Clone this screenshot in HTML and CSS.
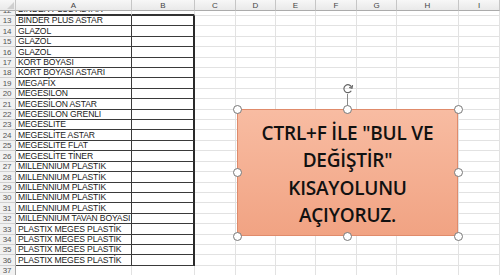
FILE: index.html
```html
<!DOCTYPE html>
<html lang="tr">
<head>
    <meta charset="UTF-8">
    <title>Excel - Bul ve Değiştir</title>
    <link rel="stylesheet" href="styles.css">
</head>
<body>
    <div class="sheet" id="sheet">
        <div class="row head">
            <div class="cell corner"><span class="tri"></span></div>
            <div class="cell">A</div>
            <div class="cell">B</div>
            <div class="cell">C</div>
            <div class="cell">D</div>
            <div class="cell">E</div>
            <div class="cell">F</div>
            <div class="cell">G</div>
            <div class="cell">H</div>
            <div class="cell">I</div>
        </div>
    </div>

    <div class="shape">
        <p>CTRL+F İLE "BUL VE<br>DEĞİŞTİR"<br>KISAYOLUNU<br>AÇIYORUZ.</p>
    </div>
    <div class="rot-line"></div>
    <svg class="rot" width="12" height="12" viewBox="0 0 12 12">
        <path d="M9.3 7.8 A4 4 0 1 1 9.6 4.2" fill="none" stroke="#666" stroke-width="1.2"/>
        <path d="M10.6 2.2 L10 5.2 L7.2 4.4" fill="none" stroke="#666" stroke-width="1.1"/>
    </svg>
    <span class="handle" style="left:237px;top:109px"></span>
    <span class="handle" style="left:347px;top:109px"></span>
    <span class="handle" style="left:458px;top:109px"></span>
    <span class="handle" style="left:237px;top:172px"></span>
    <span class="handle" style="left:458px;top:172px"></span>
    <span class="handle" style="left:237px;top:236px"></span>
    <span class="handle" style="left:347px;top:236px"></span>
    <span class="handle" style="left:458px;top:236px"></span>

    <script>
        const items = {
            12: 'BİNDER PLUS ASTAR',
            13: 'BİNDER PLUS ASTAR',
            14: 'GLAZOL',
            15: 'GLAZOL',
            16: 'GLAZOL',
            17: 'KORT BOYASI',
            18: 'KORT BOYASI ASTARI',
            19: 'MEGAFİX',
            20: 'MEGESİLON',
            21: 'MEGESİLON ASTAR',
            22: 'MEGESİLON GRENLİ',
            23: 'MEGESLİTE',
            24: 'MEGESLİTE ASTAR',
            25: 'MEGESLİTE FLAT',
            26: 'MEGESLİTE TİNER',
            27: 'MILLENNIUM PLASTİK',
            28: 'MILLENNIUM PLASTİK',
            29: 'MILLENNIUM PLASTİK',
            30: 'MILLENNIUM PLASTİK',
            31: 'MILLENNIUM PLASTİK',
            32: 'MILLENNIUM TAVAN BOYASI',
            33: 'PLASTIX MEGES PLASTİK',
            34: 'PLASTIX MEGES PLASTİK',
            35: 'PLASTIX MEGES PLASTİK',
            36: 'PLASTIX MEGES PLASTİK'
        };

        const sheet = document.getElementById('sheet');

        for (let n = 12; n <= 37; n++) {
            const row = document.createElement('div');
            row.className = 'row';
            if (n === 12) row.classList.add('cut');
            if (n === 37) row.classList.add('last');

            let html = `<div class="cell num"><span>${n}</span></div>`;
            const inTable = n >= 13 && n <= 36;
            const text = items[n] || '';
            html += `<div class="cell a ${inTable ? 't' : ''}"><span>${text}</span></div>`;
            html += `<div class="cell b ${inTable ? 't' : ''}"></div>`;
            for (let c = 0; c < 7; c++) {
                html += '<div class="cell"></div>';
            }
            row.innerHTML = html;
            sheet.appendChild(row);
        }
    </script>
</body>
</html>
```

FILE: styles.css
```css
body {
    margin: 0;
    width: 500px;
    height: 275px;
    overflow: hidden;
    background-color: #fff;
    font-family: "Liberation Sans", Arial, sans-serif;
}
.sheet {
    display: flex;
    flex-direction: column;
}
.row {
    display: grid;
    grid-template-columns: 16px 116px 63px 41px 40px 40px 41px 40px 62px 41px;
    height: 10.42px;
}
.cell {
    box-sizing: border-box;
    border-right: 1px solid #e2e2e2;
    border-bottom: 1px solid #e2e2e2;
    font-size: 8.6px;
    color: #1a1a1a;
    overflow: hidden;
    white-space: nowrap;
    display: flex;
    align-items: flex-end;
}
.cell span {
    line-height: 9px;
    padding-left: 2px;
    letter-spacing: -0.15px;
}
.head {
    height: 11px;
}
.head .cell {
    background: linear-gradient(#f7f7f7, #e9e9e9);
    border-right: 1px solid #c6c6c6;
    border-bottom: 1px solid #ababab;
    justify-content: center;
    align-items: center;
    font-size: 8px;
    color: #444;
}
.corner {
    position: relative;
}
.tri {
    position: absolute;
    right: 1px;
    bottom: 1px;
    width: 0;
    height: 0;
    border-left: 7px solid transparent;
    border-bottom: 7px solid #cfcfcf;
    padding: 0 !important;
}
.num {
    background-color: #f1f1f1;
    border-right: 1px solid #a9a9a9;
    border-bottom: 1px solid #d0d0d0;
    justify-content: center;
    font-size: 8px;
}
.num span {
    color: #555;
    padding-left: 0;
    padding-right: 1px;
}
.cut {
    height: 5px;
}
.cut .a, .cut .b {
    border-bottom: 2px solid #333;
}
.t {
    border-right: 1px solid #3a3a3a;
    border-bottom: 1px solid #3a3a3a;
}
.b.t {
    border-right: 2px solid #2a2a2a;
}
.last .b {
    border-right: 1px solid #e2e2e2;
}

.shape {
    position: absolute;
    left: 237px;
    top: 109px;
    width: 221px;
    height: 127px;
    box-sizing: border-box;
    border: 1px solid #e08b6b;
    background: linear-gradient(#f8bca2, #f1a383);
    display: flex;
    align-items: center;
    justify-content: center;
}
.shape p {
    margin: 4px 0 0;
    text-align: center;
    font-family: "Open Sans", sans-serif;
    font-size: 19px;
    font-weight: 600;
    line-height: 27.3px;
    color: #111;
    letter-spacing: -0.2px;
}
.handle {
    position: absolute;
    width: 7px;
    height: 7px;
    margin: -4px 0 0 -4px;
    border: 1px solid #777;
    border-radius: 50%;
    background-color: #fff;
}
.rot-line {
    position: absolute;
    left: 347px;
    top: 94px;
    width: 1px;
    height: 15px;
    background-color: #888;
}
.rot {
    position: absolute;
    left: 342px;
    top: 83px;
}
```
